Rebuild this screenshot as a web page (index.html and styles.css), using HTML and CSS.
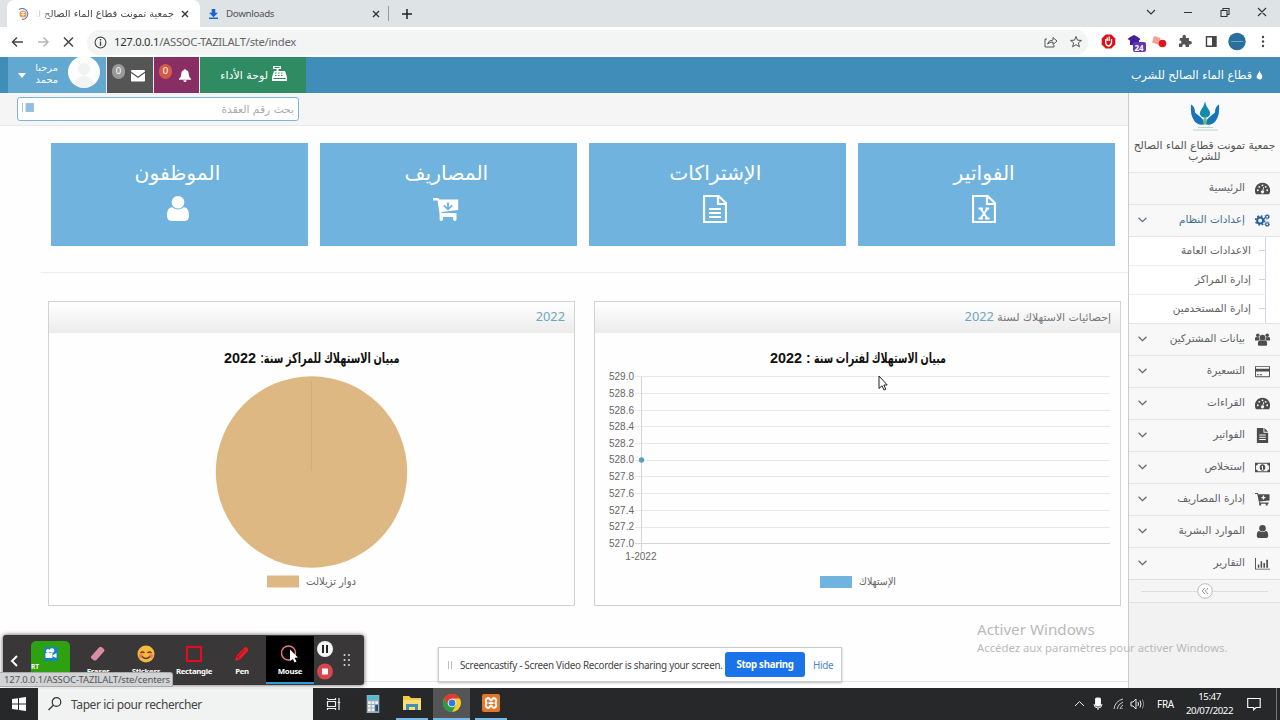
FILE: index.html
```html
<!DOCTYPE html>
<html lang="ar">
<head>
<meta charset="utf-8">
<title>جمعية تمونت قطاع الماء الصالح للشرب</title>
<link rel="stylesheet" href="styles.css">
</head>
<body>
<svg class="defs" width="0" height="0">
  <defs>
    <symbol id="gauge" viewBox="0 0 16 14"><path fill-rule="evenodd" d="M8 1a8 8 0 0 0-7 12h14A8 8 0 0 0 8 1zM3 7.800a1 1 0 1 1 0 2 1 1 0 0 1 0-2zm1.600-3.600a1 1 0 1 1 0 2 1 1 0 0 1 0-2zM8 2.600a1 1 0 1 1 0 2 1 1 0 0 1 0-2zm3.400 1.600a1 1 0 1 1 0 2 1 1 0 0 1 0-2zM13 7.800a1 1 0 1 1 0 2 1 1 0 0 1 0-2zM8.900 5.500l.8.200-.9 3.500a1.600 1.600 0 1 1-.9-.2z"/></symbol>
    <symbol id="gears" viewBox="0 0 16 14"><g fill="none" stroke="currentColor"><circle cx="5.500" cy="7" r="3.200" stroke-width="2.200"/><circle cx="5.500" cy="7" r="4.900" stroke-width="1.600" stroke-dasharray="1.930 1.920"/><circle cx="13" cy="3" r="1.600" stroke-width="1.300"/><circle cx="13" cy="3" r="2.500" stroke-width=".9" stroke-dasharray="1 1"/><circle cx="13" cy="11" r="1.600" stroke-width="1.300"/><circle cx="13" cy="11" r="2.500" stroke-width=".9" stroke-dasharray="1 1"/></g></symbol>
    <symbol id="users" viewBox="0 0 16 14"><circle cx="8" cy="5" r="3"/><circle cx="3" cy="2.500" r="1.900"/><circle cx="13" cy="2.500" r="1.900"/><path d="M0 8V6q0-2 1.500-2 1 1 3 .6Q4.500 7 5 7.500L3.500 8zM16 8V6q0-2-1.500-2-1 1-3 .6Q11.500 7 11 7.500l1.500.5zM3 12c0-3 1-4.300 2.600-4.300q2.400 1.500 4.800 0C12 7.700 13 9 13 12q0 1.700-1.800 1.700H4.800Q3 13.700 3 12z"/></symbol>
    <symbol id="card" viewBox="0 0 16 14"><path fill-rule="evenodd" d="M1 1h14q1 0 1 1v10q0 1-1 1H1q-1 0-1-1V2q0-1 1-1zm0 1v2h14V2zm0 5v5h14V7zm1 3h2v1H2zm3 0h2.500v1H5z"/></symbol>
    <symbol id="doc" viewBox="0 0 14 16"><path fill-rule="evenodd" d="M1 0h7v5h5v11H1zm8 0 4 4H9zM3.500 7v1h7V7zm0 2.300v1h7v-1zm0 2.400v1h7v-1z"/></symbol>
    <symbol id="money" viewBox="0 0 16 12"><path fill-rule="evenodd" d="M0 1h16v10H0zm3 1q0 2-2 2v4q2 0 2 2h10q0-2 2-2V4q-2 0-2-2z"/><path fill-rule="evenodd" d="M8 2.500c4 0 4 7 0 7s-4-7 0-7zM7 5v1h.6v2H7v.6h2V8h-.5V4h-.7z"/></symbol>
    <symbol id="cart" viewBox="0 0 16 14"><path fill-rule="evenodd" d="M0 0h3l.5 1.500H15.500V8L5 9.200v1h9.500v1.300h-1v2h-2v-2h-5v2h-2v-2.200L2.400 1.200H0zm8.300 2.800v1.400H6.900v1.400h1.400V7h1.400V5.600h1.400V4.200H9.700V2.800z"/></symbol>
    <symbol id="dcart" viewBox="0 0 26 24"><path d="M0 0h5q1 0 1.300 1.500H25.200v10.500L8.500 14v1H23.500v6.200a1.700 1.700 0 0 1-3.400 0V19H10v2.200a1.700 1.700 0 0 1-3.400 0V16L4.500 2.600H0z"/><path d="M15 4.300v6.500M10.800 7.300l4.200 4 4.200-4" class="cut"/></symbol>
    <symbol id="user" viewBox="0 0 22 25"><circle cx="11" cy="6.300" r="6.300"/><path d="M0 20c0-6 2-8.700 5.200-8.700q5.800 4.500 11.600 0C20 11.300 22 14 22 20q0 5-5 5H5q-5 0-5-5z"/></symbol>
    <symbol id="bars" viewBox="0 0 16 14"><path d="M0 1h1v11.500h15v1H0zM3 8h1.600v3.500H3zM6 4.500h1.600v7H6zM9 6.500h1.600v5H9zM12 3h1.800v8.500H12z"/></symbol>
    <symbol id="chev" viewBox="0 0 8 5"><path d="M.5.500 4 4 7.500.500" fill="none" stroke="currentColor" stroke-width="1.100"/></symbol>
    <symbol id="x" viewBox="0 0 8 8"><path d="M1 1l6 6M7 1 1 7" fill="none" stroke="currentColor" stroke-width="1.400"/></symbol>
  </defs>
</svg>
<div class="screen">
  <header class="tabs">
    <div class="tab active">
      <svg class="fav" viewBox="0 0 12 12"><circle cx="6" cy="6" r="3.600" fill="#f2944c"/><path d="M4 4.500h4M4 6.500h4M6 3.500v5" stroke="#fff" stroke-width=".8"/><path d="M2 1.500A5.500 5.500 0 1 1 5 11.400" fill="none" stroke="#5b84c9" stroke-width="1.100"/></svg>
      <span class="tab-ar" dir="rtl">جمعية تمونت قطاع الماء الصالح للشرب</span>
      <svg class="close"><use href="#x"/></svg>
    </div>
    <div class="tab second">
      <svg class="dl" viewBox="0 0 10 11"><path d="M3 0h4v4h3L5 9 0 4h3zM0 9.500h10V11H0z" fill="#1a62d6"/></svg>
      <span class="tab-en">Downloads</span>
      <svg class="close"><use href="#x"/></svg>
    </div>
    <svg class="plus" viewBox="0 0 10 10"><path d="M5 0v10M0 5h10" stroke="#222" stroke-width="1.500"/></svg>
    <svg class="winctl" viewBox="0 0 130 16" fill="none" stroke="#333"><path d="m6 6 4 4 4-4M43 8.500h8M80 6.500h6v6h-6zM82 6V4.500h6v6h-1.500M117 4l8 8M125 4l-8 8" stroke-width="1.100"/></svg>
  </header>
  <div class="toolbar">
    <svg class="nav" viewBox="0 0 70 14" fill="none" stroke-width="1.500"><path d="M13 7H2.500M7 2.500 2.500 7 7 11.500" stroke="#444"/><path d="M28 7h10M33.500 2.500 38 7l-4.500 4.500" stroke="#b4b7ba"/><path d="m54 2.500 9 9m0-9-9 9" stroke="#444"/></svg>
    <div class="omni">
      <svg class="info" viewBox="0 0 12 12"><circle cx="6" cy="6" r="5" fill="none" stroke="#444"/><path d="M6 5v4M6 2.800v1.300" stroke="#444" stroke-width="1.300"/></svg>
      <span class="url"><b>127.0.0.1</b>/ASSOC-TAZILALT/ste/index</span>
      <svg class="share" viewBox="0 0 42 14" fill="none" stroke="#555"><path d="M3 4H1v8h9v-2M3.500 9q1-4 5.500-4V2.500l4 3.500-4 3.500V7Q6 7 3.500 9z"/><path d="m32 1.500 1.500 3.700 4 .2-3.100 2.500 1 3.900-3.400-2.100-3.400 2.100 1-3.900-3.100-2.500 4-.2z"/></svg>
    </div>
    <svg class="exts" viewBox="0 0 180 24">
      <path d="M11.700 4.500h5.600l4 4v6l-4 4h-5.600l-4-4v-6z" fill="#d8141b"/><path d="M11.700 9v4.500q1 2.500 3 2.500t2.800-3.500V9m-4.200-1.500V11m1.900-4.500V11" stroke="#fff" stroke-width="1.300" fill="none"/>
      <path d="m40 5 3 1.500L46.500 9 45 10.500V15h-9v-4.500L33.500 9 37 6.500z" fill="#42219b"/><rect x="39" y="12" width="13" height="10" rx="2" fill="#6337b5"/><text x="40.500" y="20.500" class="badge24">24</text>
      <rect x="59" y="7" width="7" height="7" fill="#f4a191" transform="rotate(15 63 10)"/><circle cx="68.500" cy="13.500" r="3.800" fill="#e0161c"/>
      <path d="M86 8h2.500V6.500a1.700 1.700 0 0 1 3.400 0V8H95v3h1.200a1.700 1.700 0 0 1 0 3.400H95V17h-3.400v-1.200a1.600 1.600 0 0 0-3.200 0V17H85v-3.600h1a1.500 1.500 0 0 0 0-3h-.5z" fill="#555"/>
      <path d="M112.500 6.700h9.500v9.500h-9.500z" fill="none" stroke="#444" stroke-width="1.400"/><path d="M118 6.500h4v10h-4z" fill="#444"/>
      <circle cx="143" cy="11.500" r="8.700" fill="#286f9d"/><path d="M137 11.500h12" stroke="#75a6c4"/>
      <g fill="#444"><circle cx="169" cy="7" r="1.200"/><circle cx="169" cy="11.500" r="1.200"/><circle cx="169" cy="16" r="1.200"/></g>
    </svg>
  </div>

  <div class="app">
    <nav class="navbar">
      <div class="who">
        <svg class="caret" viewBox="0 0 8 5"><path d="M0 0h8L4 5z" fill="#fff"/></svg>
        <span class="hello" dir="rtl">مرحبا<br>محمد</span>
        <svg class="avatar" viewBox="0 0 32 32"><circle cx="16" cy="16" r="16" fill="#fdfdfd"/><circle cx="16" cy="13" r="6" fill="#f1f3f3"/><path d="M5 27q11-15 22 0-11 9-22 0z" fill="#f2f4f4"/></svg>
      </div>
      <div class="cell mail"><span class="cnt">0</span><svg viewBox="0 0 14 12"><path d="M1 .5h12q1 0 1 1V2L7 7 0 2v-.5q0-1 1-1zM0 3.500l7 5 7-5V11q0 1-1 1H1q-1 0-1-1z" fill="#fff"/></svg></div>
      <div class="cell bell"><span class="cnt red">0</span><svg viewBox="0 0 14 14"><path d="M7 0q1 0 1 1 3 .7 3 4.500 0 3.500 2.500 5v1h-13v-1Q3 9 3 5.500 3 1.700 6 1q0-1 1-1zM5.200 12h3.600Q8.500 14 7 14t-1.800-2z" fill="#fff"/></svg></div>
      <div class="pay"><span dir="rtl">لوحة الأداء</span><svg viewBox="0 0 15 15"><path fill-rule="evenodd" fill="#fff" d="M1 0h8v3H6.500v2H13l2 6v4H0v-4l2-6h2.500V3H1zm1.500 1v1h5V1zM3 6.500v1h1.500v-1zm3 0v1h1.500v-1zm3 0v1h1.500v-1zM3 9v1h1.500V9zm3 0v1h1.500V9zm3 0v1h1.500V9zm-7.500 3v1h12v-1z"/></svg></div>
      <div class="brand"><span dir="rtl">قطاع الماء الصالح للشرب</span><svg viewBox="0 0 8 10"><path d="M4 0q.5 2 2.200 4Q8 6.500 7 8.500T4 10 1 8.500t.8-4.500Q3.500 2 4 0z" fill="#fff"/></svg></div>
    </nav>

    <div class="body">
      <main class="main">
        <div class="searchbar">
          <div class="search"><svg viewBox="0 0 12 9"><path d="M.5 0v9M4 0h8v9H4z" fill="#8fbfe0" stroke="#a9c5d6"/></svg><span dir="rtl">بحث رقم العقدة</span></div>
        </div>
        <section class="cards">
          <div class="tile"><span dir="rtl">الموظفون</span><svg class="i-user"><use href="#user"/></svg></div>
          <div class="tile"><span dir="rtl">المصاريف</span><svg class="i-cart"><use href="#dcart"/></svg></div>
          <div class="tile"><span dir="rtl">الإشتراكات</span><svg class="i-file" viewBox="0 0 24 28" fill="none" stroke="#fff" stroke-width="2.200"><path d="M1 1h14.500L23 8v19H1zM15 1v8h8M6 14h12M6 18h12M6 22h12"/></svg></div>
          <div class="tile"><span dir="rtl">الفواتير</span><svg class="i-file" viewBox="0 0 24 28" fill="none" stroke="#fff" stroke-width="2.200"><path d="M1 1h14.500L23 8v19H1zM15 1v8h8"/><path d="m8.500 13.500 7 10M15.500 13.500l-7 10M6.500 13.500H11m2.500 0H17m-10.500 10H11m2 0h4.500" stroke-width="2"/></svg></div>
        </section>
        <section class="panels">
          <article class="panel">
            <h3 dir="rtl"><em>2022</em></h3>
            <svg class="chart" viewBox="0 0 525 272">
              <g class="ctitle"><text class="r" x="350.500" y="30" textLength="139" lengthAdjust="spacingAndGlyphs">مبيان الاستهلاك للمراكز سنة:</text><text x="175" y="30" textLength="32" lengthAdjust="spacingAndGlyphs">2022</text></g>
              <circle cx="262.500" cy="139" r="95.700" fill="#deb883"/><path d="M262.500 48v90" stroke="#cfac79"/>
              <rect x="218" y="242.500" width="32" height="12" fill="#deb883"/>
              <text class="leg" x="307" y="252" text-anchor="end" textLength="50" lengthAdjust="spacingAndGlyphs">دوار تزيلالت</text>
            </svg>
          </article>
          <article class="panel">
            <h3 dir="rtl"><span>إحصائيات الاستهلاك لسنة</span> <em>2022</em></h3>
            <svg class="chart" viewBox="-1 -1 525 272">
              <g class="ctitle"><text class="r" x="350" y="29" textLength="132" lengthAdjust="spacingAndGlyphs">مبيان الاستهلاك لفترات سنة</text><text x="210" y="29">:</text><text x="174" y="29" textLength="32" lengthAdjust="spacingAndGlyphs">2022</text></g>
              <path class="grid" d="M39 42.500h475M39 59.500h475M39 76.500h475M39 92.500h475M39 109.500h475M39 126.500h475M39 142.500h475M39 159.500h475M39 176.500h475M39 193.500h475"/>
              <path class="axis" d="M45.500 43v174M39 209.500h475"/>
              <g class="ticks"><text x="38" y="45.500">529.0</text><text x="38" y="62.500">528.8</text><text x="38" y="79.500">528.6</text><text x="38" y="95.500">528.4</text><text x="38" y="112.500">528.2</text><text x="38" y="128.500">528.0</text><text x="38" y="145.500">527.8</text><text x="38" y="162.500">527.6</text><text x="38" y="179.500">527.4</text><text x="38" y="195.500">527.2</text><text x="38" y="212.500">527.0</text><text x="60.500" y="226">1-2022</text></g>
              <circle cx="45.500" cy="126" r="2.700" fill="#5c9fc4"/>
              <rect x="224" y="242" width="32" height="12" fill="#6fb3de"/>
              <text class="leg" x="300" y="251" text-anchor="end" textLength="37" lengthAdjust="spacingAndGlyphs">الإستهلاك</text>
            </svg>
          </article>
        </section>
      </main>

      <aside class="side">
        <div class="org">
          <svg viewBox="0 0 30 30"><path d="M15 0q1 5 4 8.500 2.500 4-.5 6.500-3.500 2.500-7 0-3-2.500-.5-6.500Q14 5 15 0z" fill="#148bad"/><path d="M1 3q4 2 4 8l6 5q3 2 3 7-7 1-10-4-4-6-3-16zM29 3q-4 2-4 8l-6 5q-3 2-3 7 7 1 10-4 4-6 3-16z" fill="#1676b9"/><path d="M13.500 17q1.500-1 3 0v6h-3z" fill="#69b86b"/><path d="M8 26h15M3 28.500h25" stroke="#a5d1ba" stroke-width=".8"/></svg>
          <p dir="rtl">جمعية تمونت قطاع الماء الصالح<br>للشرب</p>
        </div>
        <div class="item"><span dir="rtl">الرئيسية</span><svg class="ic"><use href="#gauge"/></svg></div>
        <div class="item open"><svg class="ch"><use href="#chev"/></svg><span dir="rtl">إعدادات النظام</span><svg class="ic"><use href="#gears"/></svg></div>
        <div class="sub"><div><span dir="rtl">الاعدادات العامة</span></div><div><span dir="rtl">إدارة المراكز</span></div><div><span dir="rtl">إدارة المستخدمين</span></div></div>
        <div class="item"><svg class="ch"><use href="#chev"/></svg><span dir="rtl">بيانات المشتركين</span><svg class="ic"><use href="#users"/></svg></div>
        <div class="item"><svg class="ch"><use href="#chev"/></svg><span dir="rtl">التسعيرة</span><svg class="ic"><use href="#card"/></svg></div>
        <div class="item"><svg class="ch"><use href="#chev"/></svg><span dir="rtl">القراءات</span><svg class="ic"><use href="#gauge"/></svg></div>
        <div class="item"><svg class="ch"><use href="#chev"/></svg><span dir="rtl">الفواتير</span><svg class="ic"><use href="#doc"/></svg></div>
        <div class="item"><svg class="ch"><use href="#chev"/></svg><span dir="rtl">إستخلاص</span><svg class="ic"><use href="#money"/></svg></div>
        <div class="item"><svg class="ch"><use href="#chev"/></svg><span dir="rtl">إدارة المصاريف</span><svg class="ic"><use href="#cart"/></svg></div>
        <div class="item"><svg class="ch"><use href="#chev"/></svg><span dir="rtl">الموارد البشرية</span><svg class="ic person"><use href="#user"/></svg></div>
        <div class="item"><svg class="ch"><use href="#chev"/></svg><span dir="rtl">التقارير</span><svg class="ic"><use href="#bars"/></svg></div>
        <div class="fold"><i></i><svg viewBox="0 0 16 16"><circle cx="8" cy="8" r="7.300" fill="#fff" stroke="#bbb"/><path d="m7.800 5-2.600 3 2.600 3M11 5 8.400 8l2.600 3" fill="none" stroke="#999"/></svg><i></i></div>
      </aside>
    </div>
  </div>

  <footer class="taskbar">
    <svg class="win" viewBox="0 0 14 14"><path d="M0 2l6-.8v5.400H0zM7 1l7-1v6.600H7zM0 7.500h6v5.300L0 12zM7 7.500h7V14l-7-1z" fill="#fff"/></svg>
    <div class="wsearch"><svg viewBox="0 0 14 14" fill="none" stroke="#333" stroke-width="1.200"><circle cx="8.500" cy="5" r="4.300"/><path d="M5.500 8 .5 13"/></svg><span>Taper ici pour rechercher</span></div>
    <svg class="tview" viewBox="0 0 16 14" fill="none" stroke="#eee" stroke-width="1.200"><path d="M1.500 4.500h8v5h-8zM1.500 2V1M1.500 2.500h8V1M1.500 13v-1.500h8V13M13 1v12M11.800 5.500h2.500"/></svg>
    <div class="app-ic a1"><svg viewBox="0 0 16 20"><path d="M1 0h14v20H1z" fill="#9aabb6"/><path d="M2 1h12v4H2z" fill="#48bfd2"/><path d="M2.500 7h3v3h-3zm4 0h3v3h-3zm4 0h3v3h-3zm-8 4h3v3h-3zm4 0h3v3h-3zm-4 4h3v3h-3zm4 0h3v3h-3z" fill="#eef2f4"/><path d="M10.500 11h3v7h-3z" fill="#1b4d82"/></svg></div>
    <div class="app-ic a2"><svg viewBox="0 0 18 16"><path d="M0 1h6l2 2h10v12H0z" fill="#f3c84d"/><path d="M0 5h18v10H0z" fill="#fbdc75"/><path d="M3 15V9h12v6h-3v-3H6v3z" fill="#3f91ba"/></svg></div>
    <div class="app-ic a3"><svg viewBox="0 0 18 18"><circle cx="9" cy="9" r="9" fill="#f9cc2e"/><path d="M9 9 4.500 16.800A9 9 0 0 0 9 18l4-7z" fill="#279c49"/><path d="M9 18A9 9 0 0 1 1.200 4.500L6 11l5 2z" fill="#279c49"/><path d="M1.200 4.500A9 9 0 0 1 16.800 4.500H9L5 11z" fill="#df3b30"/><circle cx="9" cy="9" r="4.300" fill="#fff"/><circle cx="9" cy="9" r="3.400" fill="#3579df"/></svg></div>
    <div class="app-ic a4"><svg viewBox="0 0 18 18"><rect width="18" height="18" rx="2" fill="#e4762c"/><path d="M5.200 4.500q1.300-1 2.500.5.500 1.500 1.300 1.500t1.300-1.500q1.200-1.500 2.500-.5 2.500 1 .7 4.500 1.800 3.500-.7 4.500-1.300 1-2.500-.5-.5-1.500-1.300-1.500T7.700 13q-1.200 1.500-2.500.5-2.500-1-.7-4.500-1.800-3.500.7-4.500zM6.500 9h5" fill="none" stroke="#fff" stroke-width="2"/></svg></div>
    <svg class="tray" viewBox="0 0 72 16" fill="none" stroke="#eee"><path d="m1 10 4.500-4.500L10 10"/><rect x="21.500" y="2" width="5" height="8" rx="1" fill="#fff"/><path d="M20 8q0 4 4 4t4-4M24 12v2"/><path d="M40 13q1-8 9-10M43 13q1-5 6-7M46 13q1-3 3-4M48 13v-1" stroke="#ccc"/><path d="M57 6h2l3-3v10l-3-3h-2zM64 6q1 2 0 4M66 4.500q2 3.500 0 7"/><path d="M68.500 3.500q2.500 4.500 0 9" stroke="#888"/></svg>
    <span class="lang">FRA</span>
    <span class="clock">15:47<br>20/07/2022</span>
    <svg class="note" viewBox="0 0 14 14"><path d="M.7 1.500h12.500v9H9l-2.300 2.300v-2.300h-6z" fill="none" stroke="#fff" stroke-width="1.100"/></svg>
    <i class="peek"></i>
  </footer>

  <div class="share-bar"><i></i><span>Screencastify - Screen Video Recorder is sharing your screen.</span><b>Stop sharing</b><a>Hide</a></div>
  <div class="wm"><p>Activer Windows</p><small>Accédez aux paramètres pour activer Windows.</small></div>
  <div class="rec">
    <svg class="back" viewBox="0 0 8 12"><path d="M7 1 2 6l5 5" fill="none" stroke="#fff" stroke-width="2"/></svg>
    <div class="camtool"><svg viewBox="0 0 14 14"><rect width="14" height="14" rx="1" fill="#1683be"/><path d="M1.500 6h7v5h-7zM9 8l3.500-2v5L9 9.500z" fill="#fff"/><circle cx="4" cy="4" r="2" fill="#fff"/><circle cx="8" cy="3.500" r="2.300" fill="#fff"/></svg><b>RT</b></div>
    <div class="tool"><svg viewBox="0 0 18 18"><path d="M2 11.500 10 2.500q1.500-1.500 3 0l2 1.500q1 1.500 0 2.500L7 15.500H5L2 13z" fill="#d98ca3"/></svg><b>Eraser</b></div>
    <div class="tool"><svg viewBox="0 0 18 18"><circle cx="9" cy="9" r="8.500" fill="#f5b93e"/><circle cx="4" cy="11" r="2" fill="#ee765c"/><circle cx="14" cy="11" r="2" fill="#ee765c"/><path d="M3.500 8q2-2 4 0m3 0q2-2 4 0M5 11.500q4 4 8 0" fill="none" stroke="#5c3b1d" stroke-width="1.200"/></svg><b>Stickers</b></div>
    <div class="tool"><svg viewBox="0 0 18 18"><rect x="2" y="2" width="14" height="14" fill="none" stroke="#dc1020" stroke-width="2.200"/></svg><b>Rectangle</b></div>
    <div class="tool"><svg viewBox="0 0 18 18"><path d="m2 16 1.500-5 8-8.500q1.500-1 3 .5t.5 3L7 14.500z" fill="#ec1b24"/><path d="m5 12 7-7.500M3.500 11l3.500 3.500" stroke="#8e171b"/></svg><b>Pen</b></div>
    <div class="tool on"><svg viewBox="0 0 18 18"><circle cx="7.500" cy="8" r="7" fill="none" stroke="#ef7b7e" stroke-width="1.400"/><path d="m9 4.500 8 8-3.500.3 2 3.700-2 1-1.700-3.800L9 16z" fill="#fff"/></svg><b>Mouse</b></div>
    <svg class="ctl" viewBox="0 0 18 42"><circle cx="9" cy="10" r="8" fill="#f4f4f4"/><path d="M7 6v8M11 6v8" stroke="#222" stroke-width="2"/><circle cx="9" cy="32.500" r="8" fill="#d9454d"/><path d="M6 29.500h6v6H6z" fill="#fff"/></svg>
    <svg class="dots" viewBox="0 0 8 14" fill="#ddd"><circle cx="1.500" cy="2" r="1"/><circle cx="6" cy="2" r="1"/><circle cx="1.500" cy="7" r="1"/><circle cx="6" cy="7" r="1"/><circle cx="1.500" cy="12" r="1"/><circle cx="6" cy="12" r="1"/></svg>
  </div>
  <div class="status">127.0.0.1/ASSOC-TAZILALT/ste/centers</div>
  <svg class="cursor" viewBox="0 0 10 16"><path d="M1 1v12.500l3-2.700 2 4.200 1.800-.8-2-4.200H9.200z" fill="#fff" stroke="#222"/></svg>
</div>
</body>
</html>
```
FILE: styles.css
```css
* { box-sizing: border-box; }
body { margin: 0; font-family: "Noto Sans", "DejaVu Sans", sans-serif; }
svg { display: block; flex: none; }
.defs { position: absolute; }
.screen { position: relative; width: 1280px; height: 720px; display: flex; flex-direction: column; overflow: hidden; background: #fff; }
[dir="rtl"] { font-family: "DejaVu Sans", sans-serif; white-space: nowrap; }

/* browser chrome */
.tabs { height: 27px; background: #dee3e6; display: flex; align-items: center; flex: none; }
.tab { height: 27px; display: flex; align-items: center; }
.tab.active { width: 193px; margin-left: 7px; padding-left: 10px; background: #fff; border-radius: 7px 7px 0 0; }
.fav { width: 12px; height: 12px; }
.tab-ar { width: 139px; margin: 0 7px 0 6px; overflow: hidden; font-size: 9.800px; color: #444; -webkit-mask-image: linear-gradient(90deg, transparent, #000 18px); mask-image: linear-gradient(90deg, transparent, #000 18px); }
.close { width: 8px; height: 8px; color: #333; }
.second { width: 189px; padding-left: 9px; border-right: 1px solid #999; height: 15px; }
.dl { width: 9px; height: 10px; }
.tab-en { font-size: 9.800px; color: #555; margin-left: 8px; width: 146px; letter-spacing: -.35px; }
.plus { width: 10px; height: 10px; margin-left: 13px; }
.winctl { width: 130px; height: 16px; margin-left: auto; margin-right: 9px; margin-top: -4px; }
.toolbar { height: 30px; flex: none; display: flex; align-items: center; background: #fff; }
.nav { width: 70px; height: 14px; margin: 0 7px 0 10px; }
.omni { width: 1001px; height: 25px; border-radius: 12px; background: #f3f4f4; display: flex; align-items: center; padding-left: 7px; }
.info { width: 13px; height: 13px; }
.url { margin-left: 7px; margin-top: -2px; font-size: 11.300px; color: #666; letter-spacing: -.300px; }
.url b { font-weight: 400; color: #333; }
.share { width: 42px; height: 14px; margin-left: auto; margin-right: 2px; }
.exts { width: 180px; height: 24px; margin-left: 6px; }
.badge24 { font: bold 8px "Noto Sans", sans-serif; fill: #fff; }

/* navbar */
.app { height: 631px; flex: none; display: flex; flex-direction: column; }
.navbar { height: 36px; flex: none; display: flex; background: #3f8db8; color: #fff; }
.who { width: 98px; margin-left: 8px; background: #62a8d1; display: flex; align-items: center; }
.caret { width: 8px; height: 5px; margin-left: 10px; }
.hello { width: 32px; text-align: right; font-size: 9.800px; line-height: 12px; margin: -3px 0 0; }
.avatar { width: 32px; height: 32px; margin: -6px 0 0 10px; }
.cell { width: 46px; margin-left: 1px; display: flex; align-items: center; background: #555; box-shadow: -1px 0 #e6eaec; }
.cell.bell { background: #892e65; width: 45px; }
.cnt { width: 13px; height: 15px; margin: -8px 6px 0 5px; border-radius: 7px; background: #999; text-align: center; font-size: 9.500px; line-height: 14px; }
.cnt.red { background: #d15b47; }
.cell svg { width: 14px; height: 13px; }
.pay { width: 106px; background: #2e8b62; margin-left: 1px; box-shadow: -1px 0 #e6eaec; display: flex; align-items: center; justify-content: flex-end; gap: 4px; padding-right: 19px; font-size: 11px; }
.pay svg { width: 15px; height: 15px; margin-top: -3px; }
.brand { margin-left: auto; padding-right: 17px; display: flex; align-items: center; gap: 4px; font-size: 11.200px; }
.brand svg { width: 7px; height: 10px; }

/* content */
.body { flex: 1; display: flex; min-height: 0; }
.main { width: 1128px; background: #fefefe; }
.searchbar { height: 33px; background: #f5f5f5; border-bottom: 1px solid #e8e8e8; padding: 4px 17px; }
.search { width: 282px; height: 24px; border: 1px solid #7fb6d6; border-radius: 3px; background: #fff; display: flex; align-items: center; justify-content: space-between; padding: 0 4px; font-size: 10.700px; color: #aaa; }
.search svg { width: 12px; height: 9px; margin-top: -3px; }
.cards { display: grid; grid-template-columns: repeat(4, 257px); column-gap: 11.900px; padding: 17px 0 25px 10px; margin-left: 41px; border-bottom: 1px solid #eee; height: 147px; }
.tile { height: 103px; background: #6fb3de; color: #fff; display: flex; flex-direction: column; align-items: center; padding-top: 13px; padding-right: 4px; }
.tile span { font-size: 20.300px; line-height: 34px; }
.i-user { width: 22px; height: 25px; margin-top: 6px; fill: #fff; }
.i-cart { width: 26px; height: 24px; margin-top: 8px; fill: #fff; }
.cut { fill: none; stroke: #6fb3de; stroke-width: 1.800px; }
.i-file { width: 24px; height: 28px; margin-top: 5px; }
.panels { display: flex; gap: 19px; padding: 28px 0 0 48px; height: 409px; border-bottom: 1px solid #e5e5e5; }
.panel { width: 527px; height: 305px; border: 1px solid #d2d2d2; }
.panel h3 { margin: 0; height: 31px; padding: 0 9px; background: linear-gradient(#fff, #ebebeb); font-weight: 400; font-size: 10.900px; line-height: 31px; color: #777; }
.panel em { font: 12.800px "Noto Sans", sans-serif; color: #6fa6bf; }
.chart { width: 525px; height: 272px; }
.chart text { font-family: "Liberation Sans", "DejaVu Sans", sans-serif; }
.chart .ctitle text { font-size: 14px; font-weight: bold; fill: #111; }
.chart .r { direction: rtl; }
.chart .leg { font-size: 11px; fill: #666; }
.grid { stroke: #e8e8e8; fill: none; }
.axis { stroke: #d2d4d5; fill: none; }
.ticks text { font-size: 10px; fill: #666; text-anchor: end; }

/* sidebar */
.side { width: 152px; background: #f2f2f2; border-left: 1px solid #ccc; }
.org { height: 79px; background: #fafafa; display: flex; flex-direction: column; align-items: center; padding-top: 8px; }
.org svg { width: 30px; height: 31px; }
.org p { margin: 8px 0 0; font-size: 10.700px; line-height: 11px; text-align: center; color: #555; }
.item { height: 32px; border-top: 1px solid #e5e5e5; background: #f8f8f8; display: flex; align-items: center; padding: 0 10px 0 9px; color: #606366; font-size: 10.500px; }
.item span { margin-left: auto; margin-top: -3px; }
.ch { width: 9px; height: 6px; margin-top: -2px; color: #666; }
.ic { width: 15px; height: 15px; margin-left: 10px; fill: #4d4d4d; }
.ic.person { height: 13px; }
.open { color: #3f6e94; }
.open .ic { color: #245e9d; }
.open .ch { color: #5f7385; }
.sub { background: #fff; border-top: 1px solid #e5e5e5; height: 87px; padding-right: 14px; }
.sub div { height: 29px; border-right: 1px solid #ccd7e2; border-bottom: 1px solid #eee; display: flex; align-items: center; justify-content: flex-end; gap: 8px; font-size: 10.500px; color: #616161; padding-bottom: 2px; }
.sub div::after { content: ""; width: 6px; height: 1px; background: #ccd7e2; }
.fold { height: 24px; border-top: 1px solid #e0e0e0; border-bottom: 1px solid #e0e0e0; background: #f5f5f5; display: flex; align-items: center; padding: 0 12px; }
.fold i { height: 1px; background: #ddd; flex: 1; }
.fold svg { width: 16px; height: 16px; }

/* taskbar */
.taskbar { height: 32px; background: #272829; display: flex; align-items: center; color: #fff; }
.win { width: 14px; height: 14px; margin: 0 12px; }
.wsearch { width: 275px; height: 32px; background: #f1f2f2; color: #444; display: flex; align-items: center; padding-left: 10px; gap: 9px; font-size: 12px; letter-spacing: -.4px; }
.wsearch svg { width: 14px; height: 14px; }
.tview { width: 16px; height: 14px; margin: 0 16px 0 13px; }
.app-ic { height: 32px; display: flex; align-items: center; justify-content: center; }
.app-ic svg { width: 18px; height: 18px; }
.a1 { width: 30px; margin-right: 8px; }
.a2 { width: 32px; border-bottom: 2px solid #76b9e8; margin-right: 5px; }
.a3 { width: 37px; border-bottom: 2px solid #76b9e8; background: #555; margin-right: 5px; }
.a4 { width: 32px; border-bottom: 2px solid #76b9e8; }
.tray { width: 72px; height: 16px; margin-left: auto; }
.lang { font-size: 10px; letter-spacing: -.3px; margin-left: 11px; }
.clock { font-size: 9.700px; line-height: 14px; text-align: center; margin-left: 12px; letter-spacing: -.45px; }
.note { width: 14px; height: 14px; margin-left: 14px; }
.peek { width: 1px; height: 32px; background: #777; margin: 0 3px 0 15px; }

/* overlays */
.share-bar { position: absolute; left: 438px; top: 647px; width: 404px; height: 35px; background: #fff; border: 1px solid #ccc; box-shadow: 0 1px 2px #bbb; display: flex; align-items: center; font-size: 9.900px; letter-spacing: -.3px; color: #444; padding-left: 9px; white-space: nowrap; }
.share-bar i { width: 4px; height: 8px; border: solid #bbb; border-width: 0 1px; margin-right: 8px; }
.share-bar span { width: 258px; }
.share-bar b { margin-left: 7px; width: 80px; height: 25px; line-height: 25px; background: #1a73e8; color: #fff; border-radius: 3px; text-align: center; font-size: 9.700px; }
.share-bar a { margin-left: 8px; color: #4a86d8; }
.wm { position: absolute; left: 977px; top: 619px; color: #b9b9b9; white-space: nowrap; }
.wm p { margin: 0; font-size: 15.200px; line-height: 21px; }
.wm small { display: block; font-size: 11.300px; line-height: 16px; }
.rec { position: absolute; left: 3px; top: 635px; width: 361px; height: 50px; background: #393737; border-radius: 3px; box-shadow: 0 0 4px #555; display: flex; align-items: center; color: #fff; }
.back { width: 8px; height: 12px; margin: 2px 0 0 7px; }
.camtool { width: 39px; height: 44px; margin: 6px 4px 0 13px; background: #2ea111; border-radius: 5px; display: flex; flex-direction: column; align-items: center; padding-top: 6px; }
.camtool svg { width: 14px; height: 14px; }
.camtool b { align-self: flex-start; font-size: 6.500px; line-height: 12px; }
.tool { width: 48px; height: 48px; display: flex; flex-direction: column; align-items: center; padding-top: 9px; gap: 2px; border-bottom: 2px solid transparent; }
.tool svg { width: 18px; height: 18px; }
.tool b { font-size: 7.800px; line-height: 12px; letter-spacing: -.3px; }
.tool.on { background: #000; border-color: #2d9bd9; }
.ctl { width: 18px; height: 42px; margin-left: 2px; }
.dots { width: 8px; height: 14px; margin-left: 9px; }
.status { position: absolute; left: 0; top: 672px; width: 173px; height: 15px; background: #d2d3d4; border: 1px solid #aaa; border-left: 0; border-radius: 0 3px 0 0; font-size: 9.500px; letter-spacing: -.12px; line-height: 13px; color: #555; padding-left: 4px; white-space: nowrap; }
.cursor { position: absolute; left: 878px; top: 375px; width: 10px; height: 16px; }
```
